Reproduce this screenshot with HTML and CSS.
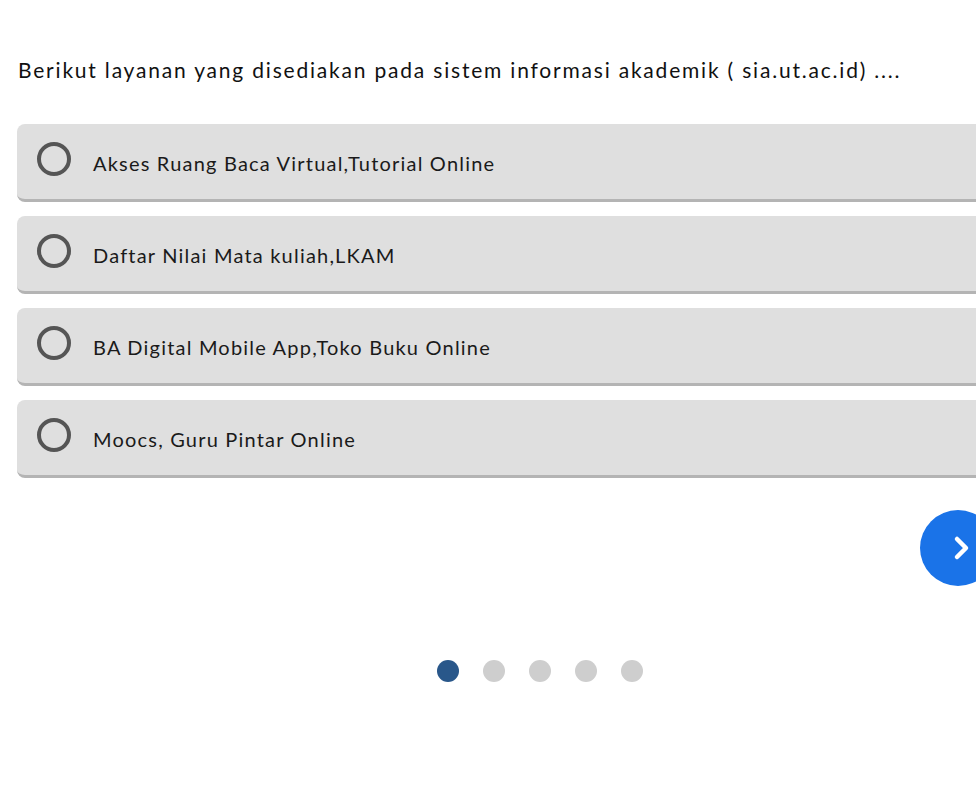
FILE: index.html
```html
<!DOCTYPE html>
<html lang="id">
<head>
<meta charset="utf-8">
<title>Kuis</title>
<link rel="stylesheet" href="styles.css">
</head>
<body>
<main class="quiz">
  <p class="question">Berikut layanan yang disediakan pada sistem informasi akademik ( sia.ut.ac.id) ....</p>
  <div class="options">
    <label class="option"><span class="radio"></span><span class="label">Akses Ruang Baca Virtual,Tutorial Online</span></label>
    <label class="option"><span class="radio"></span><span class="label">Daftar Nilai Mata kuliah,LKAM</span></label>
    <label class="option"><span class="radio"></span><span class="label">BA Digital Mobile App,Toko Buku Online</span></label>
    <label class="option"><span class="radio"></span><span class="label">Moocs, Guru Pintar Online</span></label>
  </div>
  <div class="nav-row">
    <button class="next" aria-label="Berikutnya">
      <svg width="30" height="30" viewBox="0 0 30 30"><path d="M10 6 L19 15 L10 24" fill="none" stroke="#fff" stroke-width="4.5" stroke-linecap="round" stroke-linejoin="round"/></svg>
    </button>
  </div>
  <div class="dots">
    <span class="dot active"></span>
    <span class="dot"></span>
    <span class="dot"></span>
    <span class="dot"></span>
    <span class="dot"></span>
  </div>
</main>
</body>
</html>
```
FILE: styles.css
```css
html, body {
  margin: 0;
  padding: 0;
  background: #ffffff;
  overflow: hidden;
}
body {
  width: 976px;
  height: 799px;
  font-family: "Lato", "DejaVu Sans", sans-serif;
  color: #111;
}
.quiz {
  width: 1046px;
  padding-left: 17px;
  padding-top: 56px;
  box-sizing: content-box;
}
.question {
  margin: 0 0 0 1px;
  font-size: 21px;
  line-height: 28px;
  height: 28px;
  letter-spacing: 1.8px;
  white-space: nowrap;
}
.options {
  margin-top: 40px;
  display: flex;
  flex-direction: column;
  gap: 14px;
}
.option {
  display: flex;
  align-items: center;
  background: #dfdfdf;
  border-bottom: 3px solid #b4b4b4;
  border-radius: 8px;
  box-sizing: content-box;
  padding-left: 20px;
  padding-bottom: 3px;
  height: 72px;
}
.radio {
  width: 26px;
  height: 26px;
  border: 4px solid #555555;
  border-radius: 50%;
  flex: none;
  margin-top: -2px;
}
.label {
  margin-left: 22px;
  font-size: 20px;
  letter-spacing: 1.2px;
  color: #1a1a1a;
  padding-top: 5px;
}
.nav-row {
  display: flex;
  justify-content: flex-end;
  padding-right: 67px;
  margin-top: 32px;
}
.next {
  width: 76px;
  height: 76px;
  border-radius: 50%;
  background: #1a73e8;
  border: none;
  padding: 0 0 0 8px;
  display: flex;
  align-items: center;
  justify-content: center;
  cursor: pointer;
}
.dots {
  display: flex;
  justify-content: center;
  gap: 24px;
  margin-top: 74px;
}
.dot {
  width: 22px;
  height: 22px;
  border-radius: 50%;
  background: #cecece;
}
.dot.active {
  background: #29578a;
}
```
